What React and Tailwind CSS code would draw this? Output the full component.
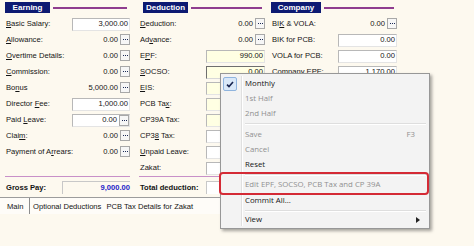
import React from "react";

const font = { fontFamily: '"Liberation Sans", Arial, sans-serif' };
const menuFont = { fontFamily: '"Open Sans", "Noto Sans", sans-serif' };

// little "..." button next to some values
function DotBtn() {
    return (
        <span className="ml-[2px] flex h-[11px] w-[10px] shrink-0 items-center justify-center gap-[1px] border border-[#a8a8a8] bg-[#f6f6f6]">
            <span className="h-[1px] w-[1px] bg-[#1b2a55]" />
            <span className="h-[1px] w-[1px] bg-[#1b2a55]" />
            <span className="h-[1px] w-[1px] bg-[#1b2a55]" />
        </span>
    );
}

function Field({ kind, value, w }) {
    if (kind === "btn") {
        return (
            <div className={`flex items-center justify-end ${w}`}>
                <span>{value}</span>
                <DotBtn />
            </div>
        );
    }
    const bg = kind === "ybox" || kind === "focus" ? "bg-[#ffffe3]" : "bg-white";
    const border =
        kind === "focus"
            ? "border-[#6f6f6f] border-b-[#d8d8d8] border-r-[#d8d8d8]"
            : "border-[#b8b8b8] border-b-[#e4e4e4] border-r-[#e4e4e4]";
    return (
        <div className={`flex h-[13px] items-center justify-end border ${bg} ${border} ${w}`}>
            <span className={kind === "boxbtn" ? "" : "pr-[1px]"}>{value}</span>
            {kind === "boxbtn" && <DotBtn />}
        </div>
    );
}

function Header({ title, boxW, className = "" }) {
    return (
        <div className={`flex h-[16px] items-start pt-[2px] ${className}`}>
            <div
                className={`flex h-[11px] items-center justify-center bg-[#0d1a72] text-[8px] font-bold text-white ${boxW}`}
            >
                {title}
            </div>
            <div className="mx-[3px] mt-[5px] h-[2px] flex-1 bg-[#8f3d8f]" />
        </div>
    );
}

function Row({ label, kind, value, w }) {
    return (
        <div className="flex h-[16px] items-center">
            <span className="flex-1 whitespace-nowrap pl-[1px]">{label}</span>
            {kind && <Field kind={kind} value={value} w={w} />}
        </div>
    );
}

const earning = [
    [<><u>B</u>asic Salary:</>, "box", "3,000.00"],
    [<><u>A</u>llowance:</>, "btn", "0.00"],
    [<><u>O</u>vertime Details:</>, "btn", "0.00"],
    [<><u>C</u>ommission:</>, "btn", "0.00"],
    [<>Bo<u>n</u>us</>, "btn", "5,000.00"],
    [<>Director <u>F</u>ee:</>, "box", "1,000.00"],
    [<>Paid <u>L</u>eave:</>, "boxbtn", "0.00"],
    [<>Clai<u>m</u>:</>, "btn", "0.00"],
    [<>Payment of A<u>r</u>rears:</>, "btn", "0.00"],
    ["", null, ""],
];

const deduction = [
    [<><u>D</u>eduction:</>, "btn", "0.00"],
    [<>Ad<u>v</u>ance:</>, "btn", "0.00"],
    [<>E<u>P</u>F:</>, "ybox", "990.00"],
    [<><u>S</u>OCSO:</>, "focus", "0.00"],
    [<><u>E</u>IS:</>, "ybox", ""],
    [<>PCB Ta<u>x</u>:</>, "ybox", ""],
    ["CP39A Tax:", "ybox", ""],
    [<>CP3<u>8</u> Tax:</>, "box", ""],
    [<><u>U</u>npaid Leave:</>, "box", ""],
    ["Zakat:", "box", ""],
];

const company = [
    [<>BI<u>K</u> &amp; VOLA:</>, "btn", "0.00"],
    ["BIK for PCB:", "box", "0.00"],
    ["VOLA for PCB:", "box", "0.00"],
    ["Company EPF:", "box", "1,170.00"],
];

function MenuItem({ children, disabled, right, h = "h-[15px]" }) {
    return (
        <div className={`flex ${h} items-center pl-[24px] pr-[14px] ${disabled ? "text-[#909090]" : "text-[#151515]"}`}>
            <span className="flex-1 whitespace-nowrap">{children}</span>
            {right}
        </div>
    );
}

function Sep({ h }) {
    return (
        <div className={`flex ${h} items-center pl-[24px] pr-[3px]`}>
            <div className="h-[2px] w-full border-t border-[#dedede] border-b border-b-white" />
        </div>
    );
}

export default function App() {
    return (
        <div className="relative h-[246px] w-[474px] overflow-hidden bg-[#fdf9ef] text-[7.6px] text-[#141414]" style={font}>
            {/* three columns */}
            <div className="flex pl-[5px]">
                <div className="w-[125px]">
                    <Header title="Earning" boxW="w-[45px]" />
                    {earning.map(([l, k, v], i) => (
                        <Row key={i} label={l} kind={k} value={v} w="w-[58px]" />
                    ))}
                </div>
                <div className="ml-[9px] w-[126px]">
                    <Header title="Deduction" boxW="w-[45px]" className="pl-[4px]" />
                    {deduction.map(([l, k, v], i) => (
                        <Row key={i} label={l} kind={k} value={v} w="w-[59px]" />
                    ))}
                </div>
                <div className="ml-[6px] w-[126px]">
                    <Header title="Company" boxW="w-[50px]" />
                    {company.map(([l, k, v], i) => (
                        <Row key={i} label={l} kind={k} value={v} w="w-[59px]" />
                    ))}
                </div>
            </div>

            {/* totals */}
            <div className="flex pl-[5px]">
                <div className="w-[125px] border-t border-[#c890c8]">
                    <div className="mt-[4px] flex h-[13px] items-center">
                        <span className="w-[57px] pl-[1px] font-bold">Gross Pay:</span>
                        <div className="flex h-[13px] flex-1 items-center justify-end border-t border-l border-[#c8c8c8] font-bold text-[#1c1cc8]">
                            9,000.00
                        </div>
                    </div>
                </div>
                <div className="ml-[9px] w-[126px] border-t border-[#c890c8]">
                    <div className="mt-[4px] flex h-[13px] items-center">
                        <span className="w-[67px] pl-[1px] font-bold">Total deduction:</span>
                        <div className="h-[13px] flex-1 border-t border-l border-[#c8c8c8] bg-white" />
                    </div>
                </div>
            </div>

            {/* tabs */}
            <div className="mt-[3px] flex h-[17px] w-[260px] items-start border-t border-[#9c9c9c] bg-[#fefcf8]">
                <span className="h-[16px] w-[30px] border-r border-[#8c8c8c] pl-[7px] pt-[3px]">Main</span>
                <span className="pl-[3px] pt-[3px]">Optional Deductions</span>
                <span className="pl-[5px] pt-[3px]">PCB Tax Details for Zakat</span>
            </div>

            {/* context menu */}
            <div
                className="absolute left-[220px] top-[73px] h-[156px] w-[210px] border border-[#979797] bg-[#f3f3f3] py-[2px] text-[7.8px] shadow-[2px_2px_3px_rgba(0,0,0,0.35)]"
                style={menuFont}
            >
                <div className="absolute bottom-[2px] left-[20px] top-[2px] w-[2px] border-l border-[#e0e0e0] border-r border-r-white" />
                <div className="relative">
                    <MenuItem>Monthly</MenuItem>
                    <div className="absolute left-[2px] top-[1px] flex h-[14px] w-[14px] items-center justify-center rounded-[2px] border border-[#8fb4de] bg-[#d9e8f8]">
                        <svg width="8" height="7" viewBox="0 0 8 7">
                            <path d="M1 3.6 L3 5.6 L7 1" fill="none" stroke="#17244f" strokeWidth="1.6" />
                        </svg>
                    </div>
                    <MenuItem disabled>1st Half</MenuItem>
                    <MenuItem disabled>2nd Half</MenuItem>
                    <Sep h="h-[6px]" />
                    <MenuItem disabled right={<span>F3</span>}>Save</MenuItem>
                    <MenuItem disabled>Cancel</MenuItem>
                    <MenuItem>Reset</MenuItem>
                    <Sep h="h-[5px]" />
                    <MenuItem disabled h="h-[16px]">Edit EPF, SOCSO, PCB Tax and CP 39A</MenuItem>
                    <MenuItem h="h-[16px]">Commit All...</MenuItem>
                    <Sep h="h-[3px]" />
                    <MenuItem
                        right={
                            <svg width="4" height="6" viewBox="0 0 4 6" className="-mr-[5px]">
                                <path d="M0 0 L4 3 L0 6 Z" fill="#222" />
                            </svg>
                        }
                    >
                        View
                    </MenuItem>
                </div>
            </div>

            {/* red annotation */}
            <div className="absolute left-[219px] top-[172px] h-[23px] w-[210px] rounded-[4px] border-2 border-[#d42a35]" />
        </div>
    );
}
